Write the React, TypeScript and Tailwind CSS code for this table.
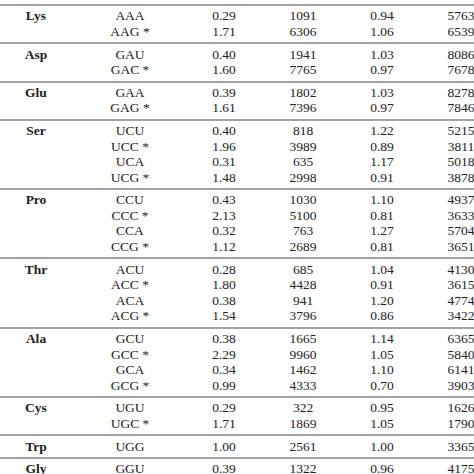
import React from "react";

type Row = [string, string, string, string, string];
type Group = { aa: string; rows: Row[] };

const groups: Group[] = [
  { aa: "Lys", rows: [["AAA", "0.29", "1091", "0.94", "5763"], ["AAG *", "1.71", "6306", "1.06", "6539"]] },
  { aa: "Asp", rows: [["GAU", "0.40", "1941", "1.03", "8086"], ["GAC *", "1.60", "7765", "0.97", "7678"]] },
  { aa: "Glu", rows: [["GAA", "0.39", "1802", "1.03", "8278"], ["GAG *", "1.61", "7396", "0.97", "7846"]] },
  {
    aa: "Ser",
    rows: [
      ["UCU", "0.40", "818", "1.22", "5215"],
      ["UCC *", "1.96", "3989", "0.89", "3811"],
      ["UCA", "0.31", "635", "1.17", "5018"],
      ["UCG *", "1.48", "2998", "0.91", "3878"],
    ],
  },
  {
    aa: "Pro",
    rows: [
      ["CCU", "0.43", "1030", "1.10", "4937"],
      ["CCC *", "2.13", "5100", "0.81", "3633"],
      ["CCA", "0.32", "763", "1.27", "5704"],
      ["CCG *", "1.12", "2689", "0.81", "3651"],
    ],
  },
  {
    aa: "Thr",
    rows: [
      ["ACU", "0.28", "685", "1.04", "4130"],
      ["ACC *", "1.80", "4428", "0.91", "3615"],
      ["ACA", "0.38", "941", "1.20", "4774"],
      ["ACG *", "1.54", "3796", "0.86", "3422"],
    ],
  },
  {
    aa: "Ala",
    rows: [
      ["GCU", "0.38", "1665", "1.14", "6365"],
      ["GCC *", "2.29", "9960", "1.05", "5840"],
      ["GCA", "0.34", "1462", "1.10", "6141"],
      ["GCG *", "0.99", "4333", "0.70", "3903"],
    ],
  },
  { aa: "Cys", rows: [["UGU", "0.29", "322", "0.95", "1626"], ["UGC *", "1.71", "1869", "1.05", "1790"]] },
  { aa: "Trp", rows: [["UGG", "1.00", "2561", "1.00", "3365"]] },
  { aa: "Gly", rows: [["GGU", "0.39", "1322", "0.96", "4175"]] },
];

export default function App() {
  return (
    <div
      className="w-[474px] h-[474px] overflow-hidden bg-white pt-[4px] text-[13.5px] text-[#222]"
      style={{ fontFamily: '"Liberation Serif", "Times New Roman", serif' }}
    >
      <div className="w-[504px]">
        {groups.map((g) => (
          <div key={g.aa} className="border-t-2 border-[#a3a3a3] pt-[2.3px] pb-[3px]">
            {g.rows.map((r, i) => (
              <div
                key={r[0]}
                className="grid grid-cols-[72px_116px_72px_86px_72px_86px] h-[15.5px] leading-[15.5px] text-center whitespace-nowrap"
              >
                <span className="font-bold">{i === 0 ? g.aa : ""}</span>
                <span>{r[0]}</span>
                <span>{r[1]}</span>
                <span>{r[2]}</span>
                <span>{r[3]}</span>
                <span>{r[4]}</span>
              </div>
            ))}
          </div>
        ))}
      </div>
    </div>
  );
}
